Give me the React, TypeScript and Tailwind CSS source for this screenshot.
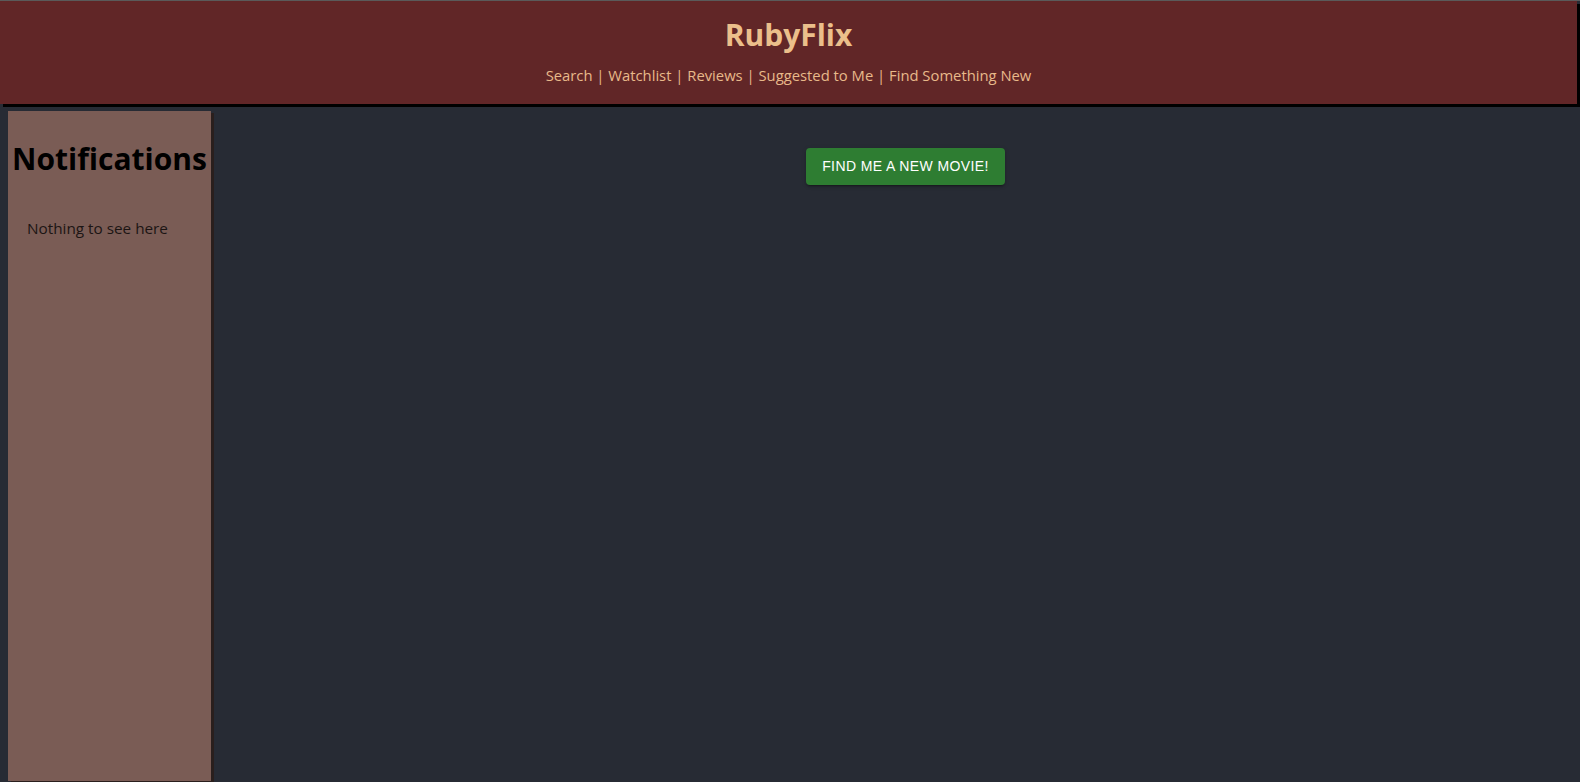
import React from "react";

export default function App() {
  return (
    <div
      className="w-[1580px] h-[782px] overflow-hidden bg-[#272b34] border-t border-[#5a5a5a] flex flex-col"
      style={{ fontFamily: '"Open Sans", "Noto Sans", sans-serif' }}
    >
      <header className="h-[103px] w-[1577px] shrink-0 bg-[#612627] shadow-[3px_3px_0_0_#000] flex flex-col items-center">
        <h1 className="mt-[14px] text-[30px] leading-[40px] font-bold text-[#ebbf8b]">RubyFlix</h1>
        <nav className="mt-[9px] text-[14.8px] leading-[22px] text-[#e8b98a]">
          Search | Watchlist | Reviews | Suggested to Me | Find Something New
        </nav>
      </header>
      <div className="flex flex-1 mt-[7px]">
        <aside className="ml-[8px] w-[203px] h-[670px] bg-[#7a5c55] shadow-[3px_2px_0_0_#2a1f1d] flex flex-col">
          <h2 className="mt-[28px] text-center text-[30px] leading-[40px] font-bold text-black whitespace-nowrap">
            Notifications
          </h2>
          <p className="mt-[38px] ml-[19px] text-[15.3px] leading-[22px] text-[#1c1514]">Nothing to see here</p>
        </aside>
        <main className="flex-1 flex justify-center pl-[20px]">
          <button
            className="mt-[37px] h-[37px] px-[16px] rounded-[4px] bg-[#2e7d32] text-white text-[14px] uppercase tracking-[0.4px] shadow-[0_3px_1px_-2px_rgba(0,0,0,0.2),0_2px_2px_0_rgba(0,0,0,0.14),0_1px_5px_0_rgba(0,0,0,0.12)]"
            style={{ fontFamily: '"Liberation Sans", Arial, sans-serif' }}
          >
            Find me a new movie!
          </button>
        </main>
      </div>
    </div>
  );
}
